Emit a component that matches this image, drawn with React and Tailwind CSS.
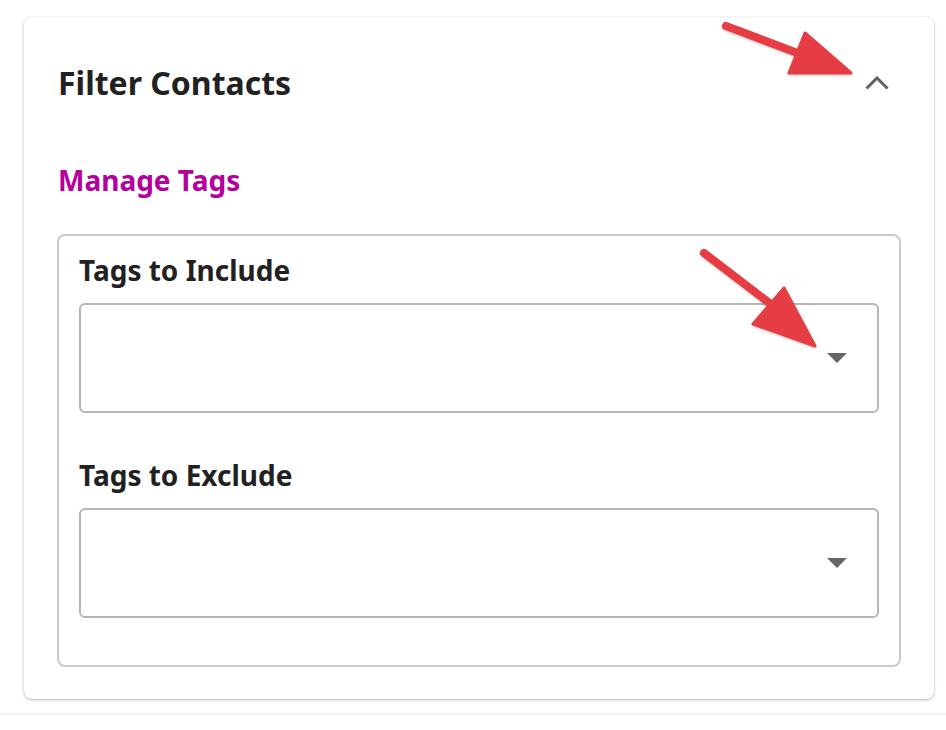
export default function App() {
  return (
    <div className="relative min-h-[730px] bg-white pt-[17px] font-['Noto_Sans',sans-serif]">
      <div className="mx-[24px] w-[910px] rounded-[8px] bg-white px-[33px] pb-[32px] pt-[46px] shadow-[0_1px_3px_rgba(0,0,0,0.28),0_0_2px_rgba(0,0,0,0.06)]">
        {/* Header */}
        <div className="flex h-[40px] items-center justify-between pl-[1px]">
          <h2 className="text-[32px] font-bold leading-[40px] text-[#212121]">Filter Contacts</h2>
          <button className="mr-[12px] flex h-[24px] w-[24px] items-center justify-center">
            <svg width="24" height="14" viewBox="0 0 24 14">
              <polyline points="1.5,12.5 12,2 22.5,12.5" fill="none" stroke="#616161" strokeWidth="3" />
            </svg>
          </button>
        </div>

        <a className="mt-[58px] block pl-[1px] text-[28px] font-bold leading-[38px] text-[#b3009e]">Manage Tags</a>

        {/* Tag filters */}
        <div className="mt-[35px] rounded-[8px] border-2 border-[#cacaca] px-[20px] pb-[47px] pt-[16px]">
          <TagSelect label="Tags to Include" />
          <div className="mt-[44px]">
            <TagSelect label="Tags to Exclude" />
          </div>
        </div>
      </div>

      <div className="mt-[14px] h-[18px] border-t-2 border-[#f4f4f4]" />

      {/* annotation arrows */}
      <svg className="pointer-events-none absolute left-0 top-0" width="946" height="730">
        <defs>
          <filter id="sh" x="-20%" y="-20%" width="140%" height="140%">
            <feDropShadow dx="0" dy="1" stdDeviation="1" floodColor="#000" floodOpacity="0.25" />
          </filter>
        </defs>
        <g filter="url(#sh)" fill="#e63e44" stroke="#e63e44" strokeLinejoin="round" strokeLinecap="round">
          <line x1="726" y1="26" x2="800" y2="54" strokeWidth="8" />
          <polygon points="805,33 789,73 851,73" strokeWidth="3" />
          <line x1="704" y1="253" x2="772" y2="305" strokeWidth="8" />
          <polygon points="784,288 753,324 815,346" strokeWidth="3" />
        </g>
      </svg>
    </div>
  )
}

function TagSelect({ label }) {
  return (
    <div>
      <div className="text-[28px] font-bold leading-[36px] text-[#212121]">{label}</div>
      <div className="mt-[15px] flex h-[110px] items-center justify-end rounded-[6px] border-2 border-[#b5b5b5] pr-[30px]">
        <svg width="20" height="10" viewBox="0 0 20 10">
          <polygon points="0,0 20,0 10,10" fill="#666666" />
        </svg>
      </div>
    </div>
  )
}
